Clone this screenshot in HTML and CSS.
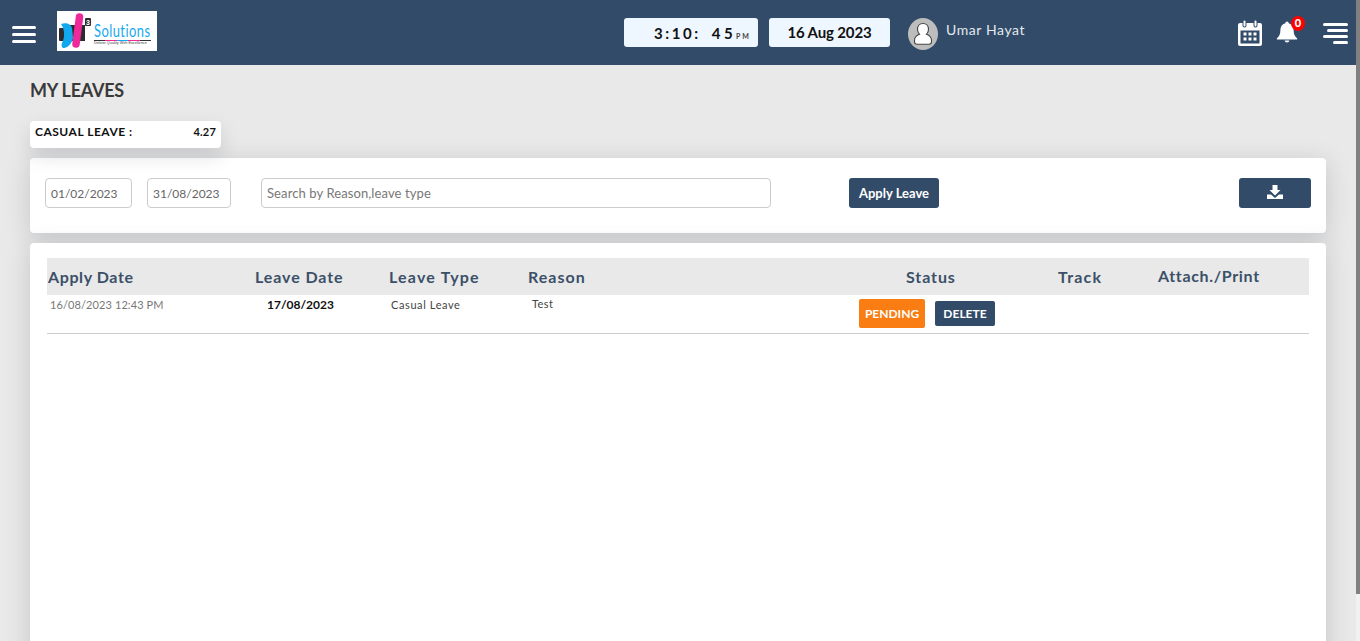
FILE: index.html
```html
<!DOCTYPE html>
<html lang="en">
<head>
<meta charset="utf-8">
<title>My Leaves</title>
<link rel="stylesheet" href="styles.css">
</head>
<body>
<div class="app">
  <header class="topbar">
    <div class="tb-left">
      <button class="icon-btn burger" aria-label="Menu"><span></span><span></span><span></span></button>
      <div class="logo">
        <svg class="logo-mark" viewBox="0 0 37 40" width="37" height="40">
          <path d="M3 17h3l4-3h18v16H12l-6 0H3a1 1 0 0 1-1-1V18a1 1 0 0 1 1-1z" fill="#2c2c30"/>
          <path d="M4 13C9 11 14 13 15 17L16 27C15 33 10 37 7 37 5 37 4 35 5 32 8 27 8 19 4 13z" fill="#12a8ef"/>
          <path d="M22.500 6L19 33" stroke="#ee2a9a" stroke-width="7.500" stroke-linecap="round"/>
          <rect x="28" y="7" width="6" height="8" rx="1" fill="#2c2c30"/>
          <text x="29" y="14" class="logo-3">3</text>
        </svg>
        <div class="logo-words">
          <div class="logo-name">Solutions</div>
          <div class="logo-rule"></div>
          <div class="logo-tag">Deliver Quality With Excellence</div>
        </div>
      </div>
    </div>
    <div class="tb-center">
      <div class="clock"><span class="clock-time">3:10:</span><span class="clock-sec">45</span><span class="clock-ampm">PM</span></div>
      <div class="today">16 Aug 2023</div>
      <div class="user">
        <svg class="avatar" viewBox="0 0 30 32" width="30" height="32">
          <ellipse cx="15" cy="16" rx="15" ry="16" fill="#bdbdbd"/>
          <path d="M15 5.500c-3.400 0-5.500 2.700-5.500 5.800 0 2.100.9 3.800 2 4.900-2.900 1-5 2.700-5 6.300v1.300c0 1.500 1 2.500 2.500 2.500h12c1.500 0 2.500-1 2.500-2.500v-1.300c0-3.600-2.100-5.300-5-6.300 1.100-1.100 2-2.800 2-4.900 0-3.100-2.100-5.800-5.500-5.800z" fill="#fff" stroke="#444" stroke-width="1.100"/>
        </svg>
        <span class="user-name">Umar Hayat</span>
      </div>
    </div>
    <div class="tb-right">
      <svg class="cal" viewBox="0 0 26 26" width="26" height="26" aria-label="Calendar">
        <path fill="#fff" fill-rule="evenodd" d="M3 3h2.500v2.500a2 2 0 0 0 4 0V3h7v2.500a2 2 0 0 0 4 0V3H23a2 2 0 0 1 2 2v19a2 2 0 0 1-2 2H3a2 2 0 0 1-2-2V5a2 2 0 0 1 2-2zM3.500 10.500v12.500a.5.5 0 0 0 .5.500h18a.5.5 0 0 0 .5-.5V10.500z"/>
        <rect x="6.500" y="0.500" width="2" height="6" rx="1" fill="#fff"/>
        <rect x="17.500" y="0.500" width="2" height="6" rx="1" fill="#fff"/>
        <g fill="#fff">
          <rect x="6.500" y="12.500" width="3" height="3"/><rect x="11.500" y="12.500" width="3" height="3"/><rect x="16.500" y="12.500" width="3" height="3"/>
          <rect x="6.500" y="17.500" width="3" height="3"/><rect x="11.500" y="17.500" width="3" height="3"/><rect x="16.500" y="17.500" width="3" height="3"/>
        </g>
      </svg>
      <div class="bell-wrap">
        <svg class="bell" viewBox="0 0 22 22" width="22" height="22" aria-label="Notifications">
          <path fill="#fff" d="M11 0.500a1.800 1.800 0 0 0-1.700 1.800C5.900 3.100 4.400 5.800 4.400 9c0 4-1.200 6.300-3.400 8.200-.5.500-.2 1.300.5 1.300h19c.7 0 1-.8.500-1.300-2.200-1.900-3.400-4.200-3.400-8.200 0-3.200-1.500-5.900-4.900-6.700A1.800 1.800 0 0 0 11 .5zM8.500 19.500a2.600 2.600 0 0 0 5 0z"/>
        </svg>
        <span class="badge">0</span>
      </div>
      <div class="lines" aria-label="Menu"><span class="l1"></span><span class="l2"></span><span class="l3"></span><span class="l4"></span></div>
    </div>
  </header>

  <main class="page">
    <h1 class="title">MY LEAVES</h1>
    <div class="balance"><span>CASUAL LEAVE :</span><span class="balance-val">4.27</span></div>

    <section class="card filters">
      <input class="field date f1" value="01/02/2023" aria-label="From date">
      <input class="field date f2" value="31/08/2023" aria-label="To date">
      <input class="field f3" placeholder="Search by Reason,leave type" aria-label="Search">
      <button class="btn apply">Apply Leave</button>
      <button class="btn dl" aria-label="Download">
        <svg viewBox="0 0 16 14" width="16" height="14"><path fill="#fff" d="M5.500 0h5v5h3L8 10.500 2.500 5h3zM0 9.500h4L8 13l4-3.500h4V14H0z"/></svg>
      </button>
    </section>

    <section class="card list">
      <div class="row head">
        <div class="c c1">Apply Date</div>
        <div class="c c2">Leave Date</div>
        <div class="c c3">Leave Type</div>
        <div class="c c4">Reason</div>
        <div class="c c5">Status</div>
        <div class="c c6">Track</div>
        <div class="c c7">Attach./Print</div>
      </div>
      <div class="row body">
        <div class="c c1 applied">16/08/2023 12:43 PM</div>
        <div class="c c2 leave">17/08/2023</div>
        <div class="c c3 type">Casual Leave</div>
        <div class="c c4 reason">Test</div>
        <div class="c c5 actions"><span class="tag pending">PENDING</span><span class="tag del">DELETE</span></div>
      </div>
    </section>
  </main>
</div>
<div class="scrollbar"><div class="thumb"></div></div>
</body>
</html>
```
FILE: styles.css
```css
* { box-sizing: border-box; }
html, body { margin: 0; height: 641px; overflow: hidden; }
body { background: #e9e9e9; font-family: "Lato", "Open Sans", sans-serif; color: #222; display: flex; }
.app { width: 1356px; height: 641px; overflow: hidden; flex: none; }
.scrollbar { width: 4px; height: 641px; background: #f1f1f1; flex: none; }
.thumb { height: 594px; background: #808080; }

.topbar { height: 65px; background: #314b69; display: flex; align-items: flex-start; position: relative; }
.tb-left { display: flex; align-items: flex-start; width: 624px; padding: 11px 0 0 12px; }
.icon-btn { background: none; border: 0; padding: 0; }
.burger { width: 24px; display: flex; flex-direction: column; gap: 4px; margin-top: 15px; }
.burger span { display: block; height: 3px; border-radius: 2px; background: #fff; }
.logo { width: 100px; height: 40px; margin-left: 21px; background: #fff; display: flex; }
.logo-mark { flex: none; }
.logo-3 { font: 700 7px "Liberation Sans", sans-serif; fill: #fff; }
.logo-words { padding-top: 11px; width: 58px; }
.logo-name { font: 400 18px/17px "Lato", sans-serif; color: #16a9ee; letter-spacing: .6px; transform: scaleX(.72); transform-origin: left; white-space: nowrap; }
.logo-rule { height: 1px; margin-top: 1px; width: 57px; background: linear-gradient(90deg, #333 0 20%, #ee2a9a 20% 40%, #16a9ee 40% 60%, #ee2a9a 60% 80%, #333 80%); }
.logo-tag { font: 400 3.800px/5px "Liberation Sans", sans-serif; color: #444; white-space: nowrap; }

.tb-center { display: flex; align-items: flex-start; padding-top: 18px; }
.clock { width: 134px; height: 29px; background: #eef7ff; border-radius: 3px; display: flex; align-items: baseline; padding: 6px 0 0 30px; color: #111; font-weight: 500; font-size: 15px; line-height: 18px; }
.clock-time { letter-spacing: 2.600px; font-weight: 700; }
.clock-sec { letter-spacing: 3.400px; margin-left: 11px; font-weight: 700; }
.clock-ampm { font-size: 7px; letter-spacing: 1.800px; margin-left: 0; color: #444; font-weight: 700; }
.today { width: 121px; height: 29px; margin-left: 11px; background: #eef7ff; border-radius: 3px; color: #111; font-size: 15px; font-weight: 700; line-height: 29px; text-align: center; letter-spacing: -.15px; }
.user { display: flex; align-items: flex-start; margin-left: 18px; }
.avatar { flex: none; }
.user-name { margin-left: 8px; color: #e4e8ee; font-size: 14px; line-height: 20px; margin-top: 2px; letter-spacing: .6px; }

.tb-right { margin-left: auto; display: flex; align-items: flex-start; padding: 20px 8px 0 0; }
.cal { flex: none; }
.bell-wrap { margin-left: 13px; position: relative; width: 22px; height: 24px; padding-top: 1px; }
.bell { display: block; }
.badge { position: absolute; left: 15px; top: -4px; width: 14px; height: 15px; border-radius: 50%; background: #f00; color: #fff; font-size: 11px; font-weight: 900; line-height: 14px; text-align: center; }
.lines { margin-left: 25px; width: 25px; display: flex; flex-direction: column; align-items: flex-end; gap: 3px; padding-top: 3px; }
.lines span { display: block; height: 3px; border-radius: 2px; background: #fff; }
.l1 { width: 25px; } .l2 { width: 21px; } .l3 { width: 25px; } .l4 { width: 15px; }

.page { padding: 0 30px; }
.title { margin: 0; padding-top: 14px; font-size: 18px; line-height: 22px; font-weight: 700; color: #3a3a3a; letter-spacing: -.25px; }
.balance { width: 191px; height: 27px; margin-top: 20px; background: #fff; border-radius: 4px; padding: 3px 5px 0; display: flex; justify-content: space-between; font-size: 12px; line-height: 15px; font-weight: 700; color: #111; box-shadow: 0 8px 18px rgba(80,85,95,.18); position: relative; letter-spacing: .5px; }
.balance-val { font-size: 11px; line-height: 15px; letter-spacing: .2px; }
.card { background: #fff; border-radius: 4px; box-shadow: 0 5px 24px rgba(80,85,95,.24); }
.filters { height: 75px; margin-top: 10px; padding: 20px 15px 0; display: flex; align-items: flex-start; }
.field { height: 30px; border: 1px solid #ccc; border-radius: 4px; padding: 0 5px; font: 400 13px "Lato", sans-serif; color: #666; outline: 0; background: #fff; letter-spacing: .1px; }
.date { font-size: 12px; letter-spacing: 0; }
.field::placeholder { color: #777; opacity: 1; }
.f1 { width: 87px; }
.f2 { width: 84px; margin-left: 15px; }
.f3 { width: 510px; margin-left: 30px; }
.btn { border: 0; height: 30px; background: #314b69; color: #fff; border-radius: 3px; font: 700 13px "Lato", sans-serif; padding: 0; }
.apply { width: 90px; margin-left: 78px; }
.dl { width: 72px; margin-left: auto; display: flex; align-items: center; justify-content: center; padding-bottom: 3px; }

.list { height: 420px; margin-top: 10px; padding: 15px 17px 0; }
.row { display: grid; grid-template-columns: 207px 134px 139px 302px 228px 100px 1fr; }
.head { height: 37px; background: #e9e9e9; color: #3b5068; font-size: 16px; font-weight: 700; line-height: 38px; }
.head .c1 { padding-left: 1px; letter-spacing: .6px; }
.head .c2 { padding-left: 1px; letter-spacing: .9px; }
.head .c3 { padding-left: 1px; letter-spacing: 1.2px; }
.head .c4 { padding-left: 1px; letter-spacing: 1px; }
.head .c5 { padding-left: 77px; letter-spacing: .9px; }
.head .c6 { padding-left: 1px; letter-spacing: 1.200px; }
.head .c7 { padding-left: 1px; line-height: 36px; letter-spacing: .65px; }
.body { height: 39px; border-bottom: 1px solid #ccc; font-size: 12px; }
.applied { color: #777; padding: 2px 0 0 3px; line-height: 15px; font-size: 11px; letter-spacing: .1px; }
.leave { color: #111; font-weight: 700; padding: 2px 0 0 13px; line-height: 15px; }
.type { color: #444; padding: 3px 0 0 3px; font-size: 11px; line-height: 14px; letter-spacing: .6px; }
.reason { color: #444; padding: 2px 0 0 5px; font-size: 11px; line-height: 13px; letter-spacing: .4px; }
.actions { display: flex; align-items: flex-start; padding: 4px 0 0 30px; grid-column: 5 / 8; }
.tag { display: block; color: #fff; font-size: 12px; font-weight: 700; text-align: center; border-radius: 2px; }
.pending { width: 66px; height: 29px; line-height: 29px; background: #f97d12; }
.del { width: 60px; height: 25px; line-height: 25px; background: #314b69; margin: 2px 0 0 10px; }
```
